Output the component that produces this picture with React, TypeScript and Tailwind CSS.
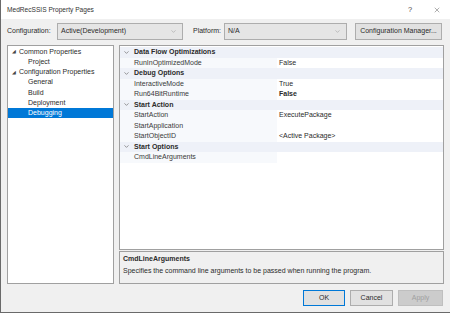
import { ChevronDown, X } from "lucide-react";

const font = { fontFamily: '"Liberation Sans", Arial, sans-serif' };

type Row = { cat?: boolean; name: string; value?: string; bold?: boolean };

const rows: Row[] = [
  { cat: true, name: "Data Flow Optimizations" },
  { name: "RunInOptimizedMode", value: "False" },
  { cat: true, name: "Debug Options" },
  { name: "InteractiveMode", value: "True" },
  { name: "Run64BitRuntime", value: "False", bold: true },
  { cat: true, name: "Start Action" },
  { name: "StartAction", value: "ExecutePackage" },
  { name: "StartApplication", value: "" },
  { name: "StartObjectID", value: "<Active Package>" },
  { cat: true, name: "Start Options" },
  { name: "CmdLineArguments", value: "" },
];

const tree = [
  { label: "Common Properties", indent: 0, arrow: true },
  { label: "Project", indent: 1 },
  { label: "Configuration Properties", indent: 0, arrow: true },
  { label: "General", indent: 1 },
  { label: "Build", indent: 1 },
  { label: "Deployment", indent: 1 },
  { label: "Debugging", indent: 1, selected: true },
];

const Combo = ({ text, width }: { text: string; width: string }) => (
  <div
    className={`${width} h-[17px] flex items-center justify-between bg-[#e5e5e5] border border-[#adadad] pl-[3px] pr-[5px]`}
  >
    <span>{text}</span>
    <ChevronDown className="w-[7px] h-[7px] text-[#8a8a8a]" strokeWidth={1.5} />
  </div>
);

const App = () => {
  return (
    <div
      style={font}
      className="w-[450px] h-[313px] bg-[#f0f0f0] border-l border-b border-[#6a6a6a] flex flex-col text-[7px] text-[#2b2b2b] overflow-hidden"
    >
      {/* title bar */}
      <div className="h-[19px] bg-white flex items-center pl-[6px] shrink-0">
        <span className="text-[6.6px] text-[#333]">MedRecSSIS Property Pages</span>
        <div className="ml-auto flex items-center">
          <span className="w-[14px] text-center text-[7.5px] text-[#444]">?</span>
          <X className="ml-[16px] mr-[9px] w-[8px] h-[8px] text-[#444]" strokeWidth={1.3} />
        </div>
      </div>

      {/* configuration row */}
      <div className="mt-[4px] h-[17px] flex items-center pl-[6px] shrink-0">
        <span className="w-[50px]">Configuration:</span>
        <Combo text="Active(Development)" width="w-[126px]" />
        <span className="ml-[10px] w-[31px]">Platform:</span>
        <Combo text="N/A" width="w-[123px]" />
        <div className="ml-[8px] w-[87px] h-[17px] flex items-center justify-center bg-[#e1e1e1] border border-[#adadad]">
          Configuration Manager...
        </div>
      </div>

      {/* main */}
      <div className="mt-[5px] h-[239px] flex pl-[6px] shrink-0">
        <div className="w-[107px] h-full bg-white border border-[#a0a0a0] pt-[1px]">
          {tree.map((t) => (
            <div
              key={t.label}
              className={`h-[10.2px] flex items-center ${t.selected ? "bg-[#0078d7] text-white" : ""}`}
            >
              <span
                className={`${t.indent ? "pl-[20px]" : "pl-[4px]"} flex items-center`}
              >
                {t.arrow && (
                  <span className="text-[5px] w-[7px] text-[#444]">◢</span>
                )}
                {t.label}
              </span>
            </div>
          ))}
        </div>

        <div className="ml-[5px] w-[325px] flex flex-col">
          <div className="h-[206px] bg-white border border-[#a0a0a0] pt-[1px]">
            {rows.map((r) =>
              r.cat ? (
                <div key={r.name} className="h-[10.5px] flex items-center bg-[#eef1f8]">
                  <ChevronDown className="ml-[3px] w-[7px] h-[7px] text-[#555]" strokeWidth={2} />
                  <span className="ml-[4px] font-bold">{r.name}</span>
                </div>
              ) : (
                <div key={r.name} className="h-[10.5px] flex items-center bg-[#f7f9fc]">
                  <span className="pl-[14px] w-[157px] text-[#3a3a3a]">{r.name}</span>
                  <span className={`h-full flex items-center flex-1 bg-white pl-[2px] ${r.bold ? "font-bold" : ""}`}>
                    {r.value}
                  </span>
                </div>
              )
            )}
          </div>
          <div className="mt-[1px] h-[33px] border border-[#a0a0a0] bg-[#f0f0f0] px-[3px] pt-[2px]">
            <div className="font-bold">CmdLineArguments</div>
            <div className="mt-[1px]">Specifies the command line arguments to be passed when running the program.</div>
          </div>
        </div>
      </div>

      {/* buttons */}
      <div className="mt-[6px] flex justify-end gap-[5px] pr-[7px] shrink-0">
        <div className="w-[42px] h-[16px] flex items-center justify-center bg-[#e1e1e1] border border-[#0078d7]">
          OK
        </div>
        <div className="w-[43px] h-[16px] flex items-center justify-center bg-[#e1e1e1] border border-[#adadad]">
          Cancel
        </div>
        <div className="w-[45px] h-[16px] flex items-center justify-center bg-[#cccccc] border border-[#bfbfbf] text-[#a0a0a0]">
          Apply
        </div>
      </div>
    </div>
  );
};

export default App;
